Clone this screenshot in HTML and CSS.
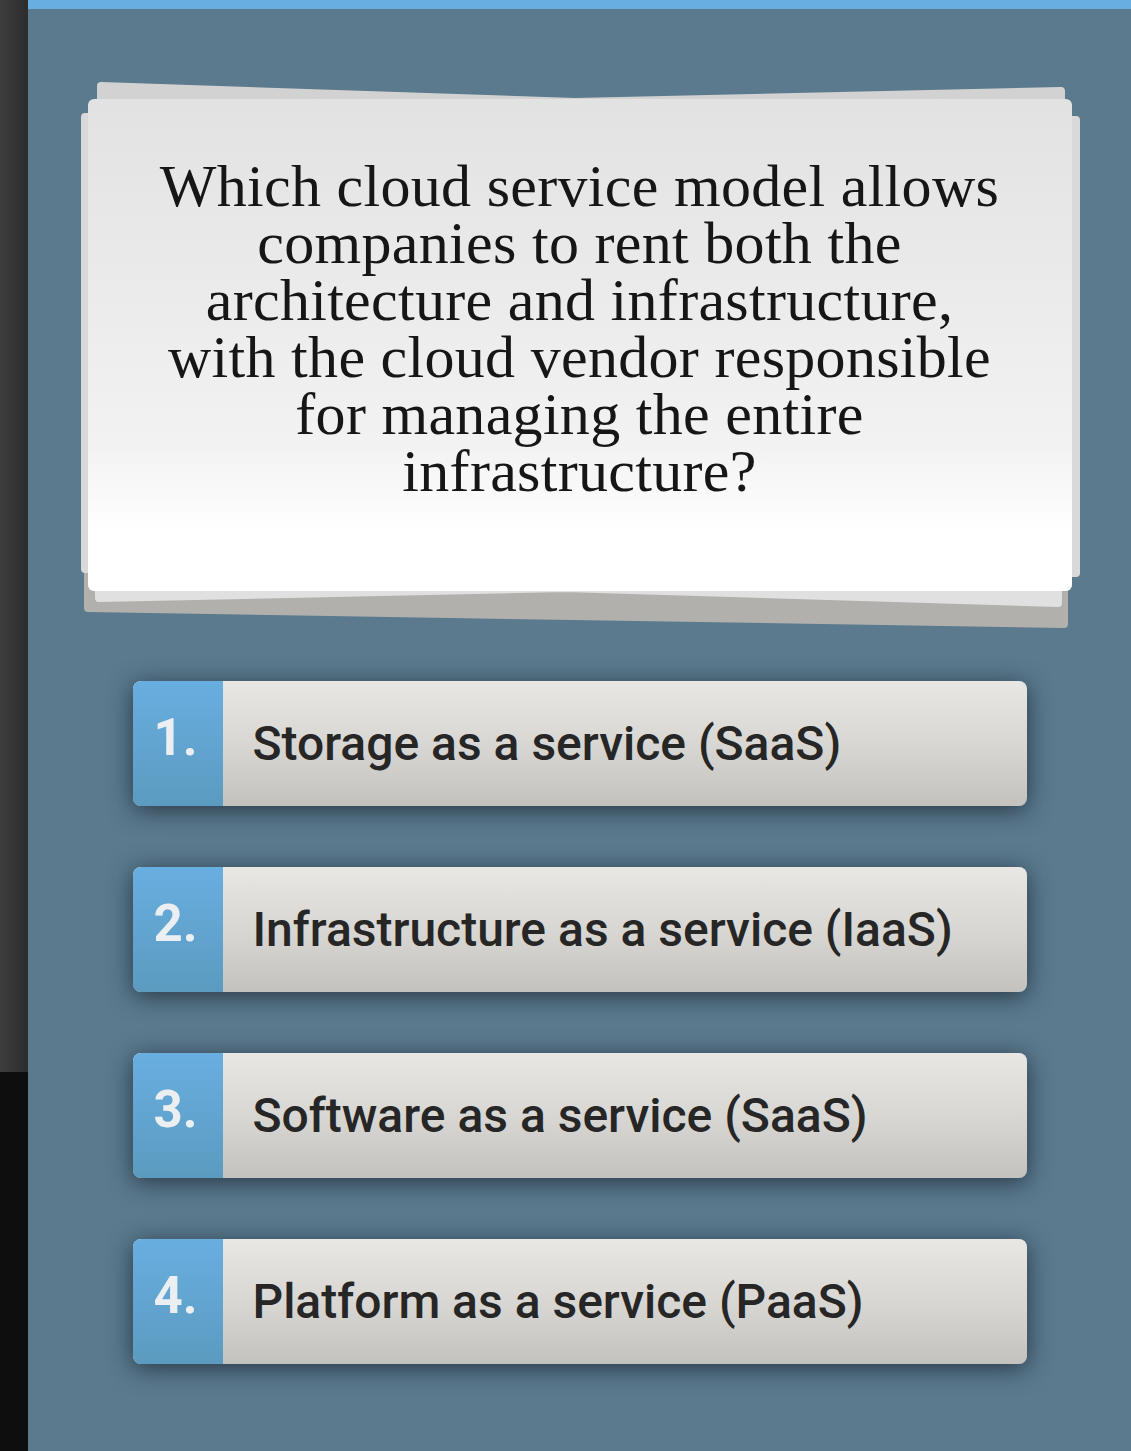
FILE: index.html
```html
<!DOCTYPE html>
<html lang="en">
<head>
<meta charset="utf-8">
<title>Quiz</title>
<link rel="stylesheet" href="styles.css">
</head>
<body>
<div class="page">
  <aside class="side"><div class="side-top"></div><div class="side-bottom"></div></aside>
  <main class="main">
    <div class="stack">
      <svg class="paper" width="984" height="492" aria-hidden="true">
        <polygon class="l-dark" points="0,300 976,300 976,525 0,509"/>
        <polygon class="l-light" points="11,300 970,300 970,504 477,489 11,499"/>
        <polygon class="l-side" points="-3,18 988,21 988,474 -3,470"/>
        <polygon class="l-top" points="13,-13 487,3 973,-8 973,200 13,200"/>
      </svg>
      <div class="card">
        <h1 class="question">Which cloud service model allows<br>companies to rent both the<br>architecture and infrastructure,<br>with the cloud vendor responsible<br>for managing the entire<br>infrastructure?</h1>
      </div>
    </div>
    <ol class="answers">
      <li class="answer"><span class="num">1.</span><span class="label">Storage as a service (SaaS)</span></li>
      <li class="answer"><span class="num">2.</span><span class="label">Infrastructure as a service (IaaS)</span></li>
      <li class="answer"><span class="num">3.</span><span class="label">Software as a service (SaaS)</span></li>
      <li class="answer"><span class="num">4.</span><span class="label">Platform as a service (PaaS)</span></li>
    </ol>
  </main>
</div>
</body>
</html>
```
FILE: styles.css
```css
html, body {
  margin: 0;
  padding: 0;
  height: 1451px;
  overflow: hidden;
}
.page {
  display: flex;
  height: 1451px;
}
.side {
  width: 28px;
  flex: none;
  display: flex;
  flex-direction: column;
}
.side-top {
  height: 1072px;
  background: linear-gradient(90deg, #3d3d3d, #2c2c2c);
}
.side-bottom {
  flex: 1;
  background: #0e0e0e;
}
.main {
  flex: 1;
  background: #5b7a8e;
  border-top: 9px solid #68aee0;
  display: flex;
  flex-direction: column;
  align-items: center;
}
.stack {
  position: relative;
  width: 984px;
  margin-top: 90px;
}
.paper {
  position: absolute;
  left: 0;
  top: 0;
  overflow: visible;
  z-index: 0;
}
.paper polygon {
  stroke-width: 8;
  stroke-linejoin: round;
}
.l-dark { fill: #b2b0ad; stroke: #b2b0ad; }
.l-light { fill: #e0e0e0; stroke: #e0e0e0; }
.l-side { fill: #d9d9d9; stroke: #d9d9d9; }
.l-top { fill: #d2d2d2; stroke: #d2d2d2; }
.card {
  position: relative;
  z-index: 1;
  box-sizing: border-box;
  height: 492px;
  border-radius: 6px;
  background: linear-gradient(180deg, #e2e2e2 0%, #f2f2f2 70%, #ffffff 88%);
  padding: 59px 20px 0;
}
.question {
  margin: 0;
  font-family: "Liberation Serif", "DejaVu Serif", serif;
  font-weight: normal;
  font-size: 60px;
  line-height: 57px;
  letter-spacing: 0.3px;
  color: #161616;
  text-align: center;
}
.answers {
  list-style: none;
  margin: 90px 0 0;
  padding: 0;
  display: flex;
  flex-direction: column;
  gap: 61px;
}
.answer {
  width: 894px;
  height: 125px;
  display: flex;
  border-radius: 8px;
  overflow: hidden;
  box-shadow: 0 4px 24px rgba(25, 38, 50, 0.8);
  background: linear-gradient(180deg, #e8e7e4 0%, #d6d5d1 55%, #c4c2be 100%);
}
.num {
  width: 90px;
  flex: none;
  box-sizing: border-box;
  padding: 25px 0 0 21px;
  background: linear-gradient(180deg, #68aee0 0%, #5b9bc0 100%);
  color: #eceff2;
  font-family: Roboto, "Liberation Sans", sans-serif;
  font-weight: 700;
  font-size: 51px;
  line-height: 64px;
}
.label {
  align-self: center;
  padding-left: 30px;
  color: #262626;
  font-family: Roboto, "Liberation Sans", sans-serif;
  font-weight: 500;
  font-size: 48px;
  line-height: 60px;
}
```
